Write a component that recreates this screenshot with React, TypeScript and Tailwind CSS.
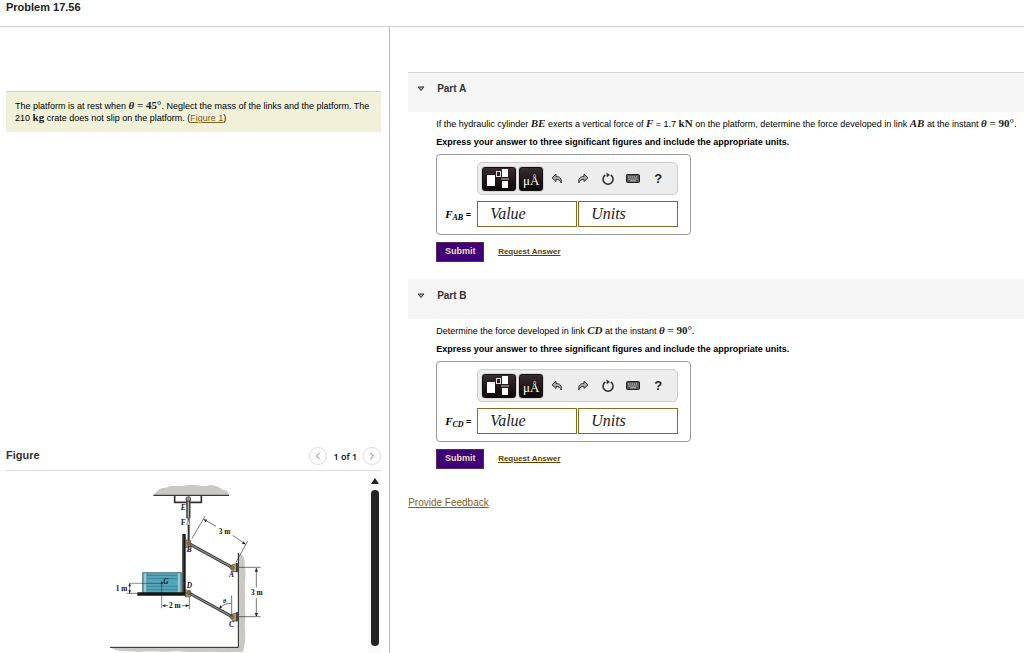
import type { ReactNode } from "react";
import { ChevronLeft, ChevronRight } from "lucide-react";

function MathText({ children }: { children: ReactNode }) {
  return <span className="font-['Liberation_Serif',serif] text-[11px] leading-none font-bold text-[#222]">{children}</span>;
}

function TemplateIcon() {
  return (
    <svg viewBox="0 0 34 24" className="w-[34px] h-6" aria-hidden="true">
      <rect x="5" y="8" width="8" height="11" fill="#fff" />
      <rect x="14.5" y="4.5" width="4" height="5" fill="none" stroke="#ddd" />
      <rect x="20" y="2" width="6" height="8" fill="#fff" />
      <path d="M19 12h8" stroke="#ccc" strokeWidth="1" />
      <rect x="20" y="14" width="6" height="7" fill="#fff" />
    </svg>
  );
}

function UndoIcon({ flip }: { flip?: boolean }) {
  return (
    <svg viewBox="0 0 12 12" className={flip ? "size-3 -scale-x-100" : "size-3"} aria-hidden="true">
      <path
        d="M1 4.8 5 1.2v2.2c3.8 0 5.8 2.2 5.2 6.6C9.300 7.500 7.700 6.300 5 6.300v2.200z"
        fill="#aaa"
        stroke="#333"
        strokeWidth="1"
        strokeLinejoin="round"
      />
    </svg>
  );
}

function ResetIcon() {
  return (
    <svg viewBox="0 0 14 14" className="size-[14px]" fill="none" aria-hidden="true">
      <path d="M4.300 3A5 5 0 1 0 9.800 3" stroke="#333" strokeWidth="1.6" />
      <path d="M5.500 .5 9 3 5.800 5.300z" fill="#333" />
    </svg>
  );
}

function KeyboardIcon() {
  return (
    <svg viewBox="0 0 14 9" className="w-[14px] h-[9px]" aria-hidden="true">
      <rect x=".5" y=".5" width="13" height="8" rx="1" fill="#555" stroke="#222" />
      <path d="M2 3h10M2.500 5h9" stroke="#ddd" strokeDasharray="1.200 .8" />
      <path d="M4 6.800h6" stroke="#ddd" strokeWidth=".8" />
    </svg>
  );
}

const darkButton =
  "h-6 shrink-0 rounded-[3px] border border-[#111] bg-linear-to-b from-[#3a2c30] to-[#0d0707] text-white shadow-[0_0_1px_#000]";

const inputBox =
  "h-[26px] w-[100px] border border-[#8a6a1c] pl-3 font-['Liberation_Serif',serif] text-[16px] italic placeholder:text-[#222]";

function AnswerBox({ name, sub }: { name: string; sub: string }) {
  return (
    <div className="w-fit rounded-[4px] border border-[#999] bg-white pt-[7px] pr-3 pb-[7px] pl-2">
      <div className="ml-8 flex h-[33px] items-center rounded-[5px] border border-[#ccc] bg-[#ededed] pl-1">
        <button type="button" aria-label="Templates" className={`${darkButton} w-[34px] [&>svg]:-m-px`}>
          <TemplateIcon />
        </button>
        <button
          type="button"
          aria-label="Symbols"
          className={`${darkButton} ml-[3px] w-6 pt-1 font-['Liberation_Serif',serif] text-[13px] leading-none`}
        >
          μÅ
        </button>
        <button type="button" aria-label="Undo" className="ml-2"><UndoIcon /></button>
        <button type="button" aria-label="Redo" className="ml-[14px]"><UndoIcon flip /></button>
        <button type="button" aria-label="Reset" className="ml-3"><ResetIcon /></button>
        <button type="button" aria-label="Keyboard" className="ml-[11px]"><KeyboardIcon /></button>
        <button type="button" aria-label="Help" className="ml-[14px] text-[13px] font-bold text-[#222]">?</button>
      </div>
      <div className="mt-[6px] flex items-center">
        <label htmlFor={`value-${sub}`} className="w-8 shrink-0 whitespace-nowrap text-[9px] font-bold">
          <i className="font-['Liberation_Serif',serif] text-[11px]">{name}</i>
          <i className="relative top-[2px] font-['Liberation_Serif',serif] text-[8px]">{sub}</i> =
        </label>
        <input id={`value-${sub}`} placeholder="Value" className={inputBox} />
        <input aria-label="Units" placeholder="Units" className={`ml-px ${inputBox}`} />
      </div>
    </div>
  );
}

interface PartProps {
  title: string;
  sub: string;
  divider?: boolean;
  children: ReactNode;
}

function Part({ title, sub, divider, children }: PartProps) {
  return (
    <section className="mb-[17px]">
      <div
        className={`flex h-10 items-start border-t bg-[#f5f5f5] pt-[9px] pl-[9px] ${
          divider ? "border-[#d8d8d8]" : "border-[#f5f5f5]"
        }`}
      >
        <button type="button" className="flex items-center text-[10px] leading-[14px] font-bold text-[#333]">
          <svg viewBox="0 0 8 6" className="mr-3 h-[6px] w-2" aria-hidden="true">
            <path d="M1 1h6L4 4.500z" fill="#aaa" stroke="#333" />
          </svg>
          {title}
        </button>
      </div>
      <div className="pl-7">
        <p className="mt-[5px] h-[14px] whitespace-nowrap leading-[14px]">{children}</p>
        <p className="mt-1 mb-[5px] leading-[14px] font-bold">
          Express your answer to three significant figures and include the appropriate units.
        </p>
        <AnswerBox name="F" sub={sub} />
        <div className="mt-[7px] flex items-center">
          <button type="submit" className="h-5 w-12 border border-[#5a2a50] bg-[#3d0079] text-[9px] font-bold text-[#f0dfb4]">
            Submit
          </button>
          <a href="#" className="ml-[14px] text-[8px] font-bold text-[#663c00] underline">Request Answer</a>
        </div>
      </div>
    </section>
  );
}

function PlatformFigure() {
  return (
    <svg
      viewBox="0 0 540 534"
      className="mt-1 ml-[94px] h-[178px] w-[180px] font-['Liberation_Serif',serif] text-[22px] font-bold"
      role="img"
      aria-label="Platform with hydraulic cylinder and links"
    >
      {/* ceiling */}
      <path d="M160 60C172 46 178 38 198 38 215 28 235 36 252 32 278 24 300 36 322 32 345 28 360 38 368 44 385 46 386 54 388 60z" fill="#c9c8c4" />
      <path d="M160 61h227" stroke="#111" strokeWidth="3" />
      <path d="M224 62v20h80V62" fill="none" stroke="#333" strokeWidth="5" />
      {/* wall and floor */}
      <path d="M414 235C430 236 436 250 434 272 441 300 431 330 436 360 432 390 440 420 434 450 438 480 436 510 428 530L414 530z" fill="#c9c8c4" />
      <path d="M30 517C60 536 85 525 112 531 160 524 190 534 230 528 280 536 330 526 380 532L430 530V517z" fill="#c9c8c4" />
      <path d="M415 234V517H30" fill="none" stroke="#222" strokeWidth="3" />
      {/* links */}
      <g stroke="#333" strokeWidth="9">
        <path d="M267 206 396 277M267 354 396 425" />
        <path d="M267 206 396 277M267 354 396 425" stroke="#888a90" strokeWidth="4" />
      </g>
      {/* cylinder */}
      <path d="M265 72v58" stroke="#444" strokeWidth="13" />
      <path d="M265 76v52" stroke="#aaa" strokeWidth="4" />
      <path d="M266 130v70" stroke="#333" strokeWidth="6" />
      <path d="M265 132l6 18h-12z" fill="#ccc" stroke="#555" />
      <circle cx="265" cy="72" r="7" fill="#999" stroke="#222" strokeWidth="2" />
      {/* crate */}
      <path d="M128 293h116v62H128z" fill="#55a6bc" stroke="#214b58" strokeWidth="2" />
      <path d="M130 294h10v60h-10zM232 294h10v60h-10z" fill="#94cbd6" stroke="#295e6b" />
      <path d="M141 301h91M141 311h91M141 334h91M141 344h91" stroke="#2d7184" strokeWidth="2" />
      <path d="M88 325h100M185 318v82" stroke="#222" strokeWidth="1.500" />
      {/* platform */}
      <path d="M252 177v184M112 357h146" stroke="#171717" strokeWidth="10" />
      <path d="M250 182v170" stroke="#5b4a3c" strokeWidth="2" />
      {/* pins */}
      <g fill="#b49a64" stroke="#4b3a20" strokeWidth="2">
        <path d="M257 195l15 2v17l-15 4zM257 345l15 2v17l-15 2z" />
        <path d="M411 266l-17 4-5 8 10 12h12zM411 414l-17 4-5 8 10 12h12z" />
      </g>
      <g fill="#777" stroke="#111">
        <circle cx="266" cy="205" r="5" />
        <circle cx="266" cy="354" r="5" />
        <circle cx="397" cy="278" r="5" />
        <circle cx="397" cy="426" r="5" />
      </g>
      <path d="M411 264v28M411 411v28" stroke="#222" strokeWidth="4" />
      {/* dimensions */}
      <g stroke="#333" strokeWidth="2" fill="none">
        <path d="M276 190 315 124M408 262 443 198M311 133 348 154M398 181 437 208" />
        <path d="M416 277h66M416 425h66M469 279v58M469 369v54" />
        <path d="M89 325v30M80 355h32M188 392h16M246 392h21M268 366v36M395 361v62" />
        <path d="M357 402Q368 385 394 385" />
      </g>
      <g fill="#222">
        <path d="M311 133l11 1-5 8zM437 208l-11-1 5-8zM469 279l-5 11h10zM469 425l-5-11h10z" />
        <path d="M89 325l-4 9h8zM89 355l-4-9h8zM186 392l10-4v8zM267 392l-10-4v8zM357 402l4-11 6 6z" />
      </g>
      <g fill="#111">
        <text x="242" y="105" fontStyle="italic">E</text>
        <text x="243" y="149">F</text>
        <text x="260" y="232" fontStyle="italic">B</text>
        <text x="387" y="307" fontStyle="italic">A</text>
        <text x="260" y="340" fontStyle="italic">D</text>
        <text x="387" y="457" fontStyle="italic">C</text>
        <text x="190" y="327" fontStyle="italic">G</text>
        <text x="369" y="384" fontStyle="italic" fontSize="18">θ</text>
        <text x="356" y="178">3 m</text>
        <text x="453" y="361">3 m</text>
        <text x="207" y="400">2 m</text>
        <text x="47" y="348">1 m</text>
      </g>
      <circle cx="185" cy="325" r="3" fill="#111" />
    </svg>
  );
}

function App() {
  return (
    <div className="flex min-h-screen flex-col bg-white font-['Liberation_Sans',sans-serif] text-[9px] text-black">
      <header className="h-[27px] border-b border-[#d5d5d5] pl-[6px]">
        <h1 className="text-[11px] leading-[14px] font-bold text-[#222]">Problem 17.56</h1>
      </header>

      <main className="flex grow">
        <aside className="flex w-[38.1%] shrink-0 flex-col border-r border-[#c9b8a6] pr-2 pl-[6px]">
          <div className="mt-16 border-t border-[#d0d0c4] bg-[#f0f1d8] pt-2 pr-1 pb-2 pl-[9px]">
            <p className="leading-3">
              The platform is at rest when <MathText><i>θ</i> = 45°</MathText>. Neglect the mass of the links and the
              platform. The 210 <MathText>kg</MathText> crate does not slip on the platform. (
              <a href="#figure" className="text-[#84601a] underline">Figure 1</a>)
            </p>
          </div>

          <section id="figure" className="mt-auto">
            <div className="flex h-6 items-start border-b border-[#ddd]">
              <h2 className="grow text-[11px] leading-[16px] font-bold text-[#333]">Figure</h2>
              <button type="button" aria-label="Previous" className="flex size-[18px] items-center justify-center rounded-full border border-[#ddd] text-[#777]">
                <ChevronLeft size={12} />
              </button>
              <span className="mx-[6px] font-['Open_Sans',sans-serif] text-[9px] leading-5 font-semibold">1 of 1</span>
              <button type="button" aria-label="Next" className="flex size-[18px] items-center justify-center rounded-full border border-[#ddd] text-[#777]">
                <ChevronRight size={12} />
              </button>
            </div>
            <div className="flex h-[182px]">
              <div className="grow">
                <PlatformFigure />
              </div>
              <div className="flex w-[13px] flex-col items-center bg-[#fafafa] pt-[7px] pb-[7px]">
                <svg viewBox="0 0 8 6" className="h-[6px] w-2" aria-hidden="true">
                  <path d="M4 0 8 6H0z" fill="#222" />
                </svg>
                <div className="mt-[6px] w-2 grow rounded-full bg-[#242424]" />
              </div>
            </div>
          </section>
        </aside>

        <div className="min-w-0 grow pt-[45px] pl-[18px]">
          <Part title="Part A" sub="AB" divider>
            If the hydraulic cylinder <MathText><i>BE</i></MathText> exerts a vertical force of{" "}
            <MathText><i>F</i></MathText> = 1.7 <MathText>kN</MathText> on the platform, determine the force developed in
            link <MathText><i>AB</i></MathText> at the instant <MathText><i>θ</i> = 90°</MathText>.
          </Part>
          <Part title="Part B" sub="CD">
            Determine the force developed in link <MathText><i>CD</i></MathText> at the instant{" "}
            <MathText><i>θ</i> = 90°</MathText>.
          </Part>
          <a href="#" className="mt-[26px] block w-fit text-[10px] text-[#84601a] underline">Provide Feedback</a>
        </div>
      </main>
    </div>
  );
}

export default App;
